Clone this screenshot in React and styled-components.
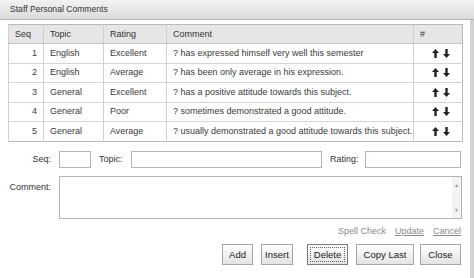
import React from 'react';
import styled, { createGlobalStyle } from 'styled-components';

const GlobalStyle = createGlobalStyle`
  html, body {
    margin: 0;
    padding: 0;
    background: #ffffff;
  }
  body {
    font-family: "Liberation Sans", Arial, sans-serif;
    font-size: 9px;
    color: #3a3a3a;
  }
`;

const comments = [
  { seq: 1, topic: 'English', rating: 'Excellent', text: '? has expressed himself very well this semester' },
  { seq: 2, topic: 'English', rating: 'Average', text: '? has been only average in his expression.' },
  { seq: 3, topic: 'General', rating: 'Excellent', text: '? has a positive attitude towards this subject.' },
  { seq: 4, topic: 'General', rating: 'Poor', text: '? sometimes demonstrated a good attitude.' },
  { seq: 5, topic: 'General', rating: 'Average', text: '? usually demonstrated a good attitude towards this subject.' },
];

const Panel = styled.div`
  width: 474px;
  height: 278px;
  display: flex;
  flex-direction: column;
  box-sizing: border-box;
`;

const TitleBar = styled.div`
  height: 19px;
  line-height: 19px;
  padding-left: 10px;
  border-bottom: 1px solid #b4b4b4;
  background: linear-gradient(#f2f2f2, #dcdcdc);
  color: #333;
  font-size: 8.6px;
`;

const Body = styled.div`
  flex: 1;
  border-right: 4px solid #d2d2d2;
  padding: 4px 7px 0 8px;
  display: flex;
  flex-direction: column;
`;

const Table = styled.table`
  width: 100%;
  border-collapse: collapse;
  border: 1px solid #b9b9b9;
  table-layout: fixed;
`;

const HeadCell = styled.th`
  height: 18px;
  padding: 0 0 0 6px;
  text-align: left;
  font-weight: normal;
  background: #e6e6e6;
  border-left: 1px solid #cfcfcf;
  border-bottom: 1px solid #c4c4c4;
  color: #333;
`;

const Cell = styled.td`
  height: 18.5px;
  padding: 0 ${p => (p.$right ? '6px' : '0')} 0 6px;
  line-height: 11px;
  text-align: ${p => (p.$right ? 'right' : p.$center ? 'center' : 'left')};
  border-left: 1px solid #cfcfcf;
  border-top: 1px solid #d4d4d4;
  white-space: nowrap;
  overflow: hidden;
`;

const Arrows = styled.span`
  display: inline-flex;
  gap: 4px;
  align-items: center;
  vertical-align: middle;
`;

const ArrowUp = () => (
  <svg width="7" height="9" viewBox="0 0 7 9">
    <path d="M3.5 0 L7 4 L4.7 4 L4.7 9 L2.3 9 L2.3 4 L0 4 Z" fill="#222" />
  </svg>
);

const ArrowDown = () => (
  <svg width="7" height="9" viewBox="0 0 7 9">
    <path d="M2.3 0 L4.7 0 L4.7 5 L7 5 L3.5 9 L0 5 L2.3 5 Z" fill="#222" />
  </svg>
);

const FieldRow = styled.div`
  display: flex;
  align-items: ${p => (p.$top ? 'flex-start' : 'center')};
  margin-top: ${p => p.$mt}px;
`;

const Label = styled.label`
  width: ${p => p.$w}px;
  margin-left: ${p => p.$ml || 0}px;
  margin-right: ${p => p.$mr}px;
  text-align: ${p => (p.$right ? 'right' : 'left')};
  padding-top: ${p => (p.$top ? '6px' : '0')};
  color: #333;
  flex-shrink: 0;
`;

const Input = styled.input`
  box-sizing: border-box;
  width: ${p => p.$w}px;
  height: 17px;
  border: 1px solid #b4b4b4;
  margin: 0;
  padding: 0 3px;
  font: inherit;
`;

const CommentBox = styled.div`
  box-sizing: border-box;
  width: 403px;
  height: 43px;
  border: 1px solid #b4b4b4;
  display: flex;
`;

const TextArea = styled.textarea`
  flex: 1;
  border: none;
  resize: none;
  outline: none;
  margin: 0;
  padding: 3px;
  font: inherit;
  overflow: hidden;
`;

const ScrollTrack = styled.div`
  width: 9px;
  background: #f3f3f3;
  display: flex;
  flex-direction: column;
  justify-content: space-between;
  align-items: center;
  padding: 6px 0 5px;
  color: #9a9a9a;
  font-size: 5px;
  line-height: 5px;
`;

const LinkRow = styled.div`
  display: flex;
  justify-content: flex-end;
  gap: 9px;
  margin-top: 6px;
  padding-right: 2px;
  line-height: 12px;
`;

const LinkText = styled.span`
  color: #8a8a8a;
  text-decoration: ${p => (p.$plain ? 'none' : 'underline')};
`;

const ButtonRow = styled.div`
  display: flex;
  justify-content: flex-end;
  gap: 8px;
  margin-top: 7px;
  padding-right: 2px;
`;

const Button = styled.button`
  box-sizing: border-box;
  width: ${p => p.$w}px;
  height: 21px;
  margin-left: ${p => p.$ml || 0}px;
  padding: 0;
  font: inherit;
  font-size: 9.5px;
  color: #222;
  border: 1px solid ${p => (p.$focus ? '#7a7a7a' : '#a6a6a6')};
  background: linear-gradient(#ffffff, #e3e3e3);
  outline: ${p => (p.$focus ? '1px dotted #666' : 'none')};
  outline-offset: -4px;
`;

export default function App() {
  return (
    <>
      <GlobalStyle />
      <Panel>
        <TitleBar>Staff Personal Comments</TitleBar>
        <Body>
          <Table>
            <colgroup>
              <col style={{ width: 35 }} />
              <col style={{ width: 60 }} />
              <col style={{ width: 63 }} />
              <col style={{ width: 247 }} />
              <col />
            </colgroup>
            <thead>
              <tr>
                <HeadCell>Seq</HeadCell>
                <HeadCell>Topic</HeadCell>
                <HeadCell>Rating</HeadCell>
                <HeadCell>Comment</HeadCell>
                <HeadCell>#</HeadCell>
              </tr>
            </thead>
            <tbody>
              {comments.map(c => (
                <tr key={c.seq}>
                  <Cell $right>{c.seq}</Cell>
                  <Cell>{c.topic}</Cell>
                  <Cell>{c.rating}</Cell>
                  <Cell>{c.text}</Cell>
                  <Cell $center>
                    <Arrows>
                      <ArrowUp />
                      <ArrowDown />
                    </Arrows>
                  </Cell>
                </tr>
              ))}
            </tbody>
          </Table>

          <FieldRow $mt={9}>
            <Label $w={43} $mr={8} $right>Seq:</Label>
            <Input $w={32} />
            <Label $w={24} $ml={8} $mr={8}>Topic:</Label>
            <Input $w={191} />
            <Label $w={27} $ml={8} $mr={8}>Rating:</Label>
            <Input $w={96} />
          </FieldRow>

          <FieldRow $mt={8} $top>
            <Label $w={43} $mr={8} $right $top>Comment:</Label>
            <CommentBox>
              <TextArea />
              <ScrollTrack>
                <span>▲</span>
                <span>▼</span>
              </ScrollTrack>
            </CommentBox>
          </FieldRow>

          <LinkRow>
            <LinkText $plain>Spell Check</LinkText>
            <LinkText>Update</LinkText>
            <LinkText>Cancel</LinkText>
          </LinkRow>

          <ButtonRow>
            <Button $w={31}>Add</Button>
            <Button $w={32}>Insert</Button>
            <Button $w={41} $ml={6} $focus>Delete</Button>
            <Button $w={58}>Copy Last</Button>
            <Button $w={41} $ml={-2}>Close</Button>
          </ButtonRow>
        </Body>
      </Panel>
    </>
  );
}
